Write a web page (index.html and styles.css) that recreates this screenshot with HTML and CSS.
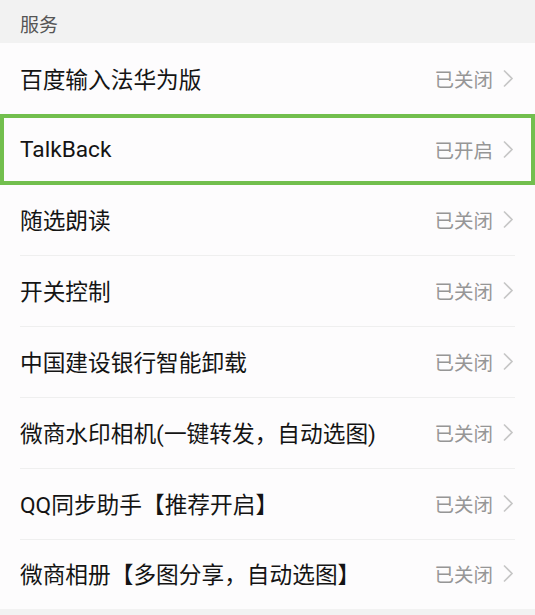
FILE: index.html
```html
<!DOCTYPE html>
<html lang="zh-CN">
<head>
  <meta charset="UTF-8" />
  <meta name="viewport" content="width=device-width, initial-scale=1.0" />
  <title>服务</title>
  <link rel="stylesheet" href="styles.css">
</head>
<body>
  <div class="section-title">服务</div>

  <ul class="list">
    <li class="row">
      <span class="name">百度输入法华为版</span>
      <span class="status">已关闭</span>
      <svg class="arrow" viewBox="0 0 12 20"><path d="M2 2 L10 10 L2 18" /></svg>
    </li>
    <li class="row focused">
      <span class="name">TalkBack</span>
      <span class="status">已开启</span>
      <svg class="arrow" viewBox="0 0 12 20"><path d="M2 2 L10 10 L2 18" /></svg>
    </li>
    <li class="row">
      <span class="name">随选朗读</span>
      <span class="status">已关闭</span>
      <svg class="arrow" viewBox="0 0 12 20"><path d="M2 2 L10 10 L2 18" /></svg>
    </li>
    <li class="row">
      <span class="name">开关控制</span>
      <span class="status">已关闭</span>
      <svg class="arrow" viewBox="0 0 12 20"><path d="M2 2 L10 10 L2 18" /></svg>
    </li>
    <li class="row">
      <span class="name">中国建设银行智能卸载</span>
      <span class="status">已关闭</span>
      <svg class="arrow" viewBox="0 0 12 20"><path d="M2 2 L10 10 L2 18" /></svg>
    </li>
    <li class="row">
      <span class="name">微商水印相机(一键转发，自动选图)</span>
      <span class="status">已关闭</span>
      <svg class="arrow" viewBox="0 0 12 20"><path d="M2 2 L10 10 L2 18" /></svg>
    </li>
    <li class="row">
      <span class="name">QQ同步助手【推荐开启】</span>
      <span class="status">已关闭</span>
      <svg class="arrow" viewBox="0 0 12 20"><path d="M2 2 L10 10 L2 18" /></svg>
    </li>
    <li class="row">
      <span class="name">微商相册【多图分享，自动选图】</span>
      <span class="status">已关闭</span>
      <svg class="arrow" viewBox="0 0 12 20"><path d="M2 2 L10 10 L2 18" /></svg>
    </li>
  </ul>
</body>
</html>
```

FILE: styles.css
```css
body {
  font-family: Roboto, "Noto Sans CJK SC", sans-serif;
  background-color: #f2f2f2;
  margin: 0;
  padding: 0;
}

.section-title {
  height: 43px;
  padding: 0 20px;
  display: flex;
  align-items: center;
  font-size: 19px;
  color: #555;
  box-sizing: border-box;
  padding-top: 4px;
}

.list {
  list-style: none;
  margin: 0;
  padding: 0;
  background: #fdfcfd;
}

.row {
  position: relative;
  height: 70.8px;
  display: flex;
  align-items: center;
  padding: 0 21px 0 20px;
  box-sizing: border-box;
}

.row + .row::before {
  content: "";
  position: absolute;
  top: 0;
  left: 20px;
  right: 20px;
  height: 1px;
  background: #efefef;
}

.row.focused {
  border: 4px solid #72bf4e;
  padding: 0 17px 0 16px;
}

.row.focused::before,
.row.focused + .row::before {
  display: none;
}

.name {
  flex: 1;
  font-size: 22.7px;
  color: #141414;
  white-space: nowrap;
}

.status {
  font-size: 19.5px;
  color: #969696;
  margin-right: 9px;
}

.arrow {
  width: 12px;
  height: 21px;
  fill: none;
  stroke: #c6c6c6;
  stroke-width: 1.6;
}
```
